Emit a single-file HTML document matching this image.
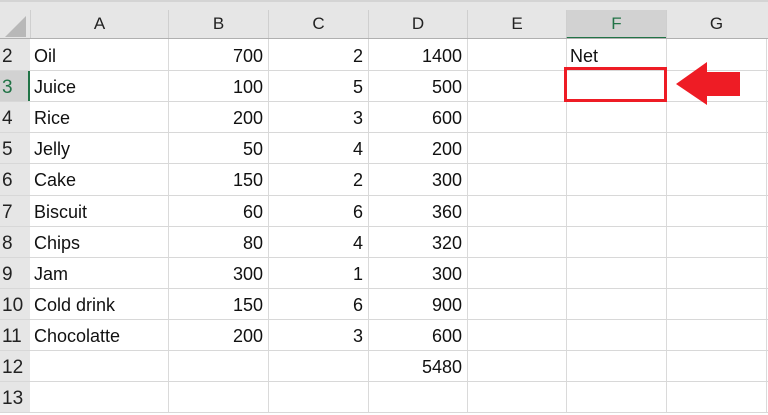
<!DOCTYPE html><html><head><style>
body{margin:0;width:768px;height:413px;overflow:hidden;background:#fff;font-family:"Liberation Sans",sans-serif;position:relative}
.a{position:absolute;box-sizing:border-box}
.h{background:#e6e6e6;color:#222;font-size:17px;text-align:center;line-height:28px}
.t{font-size:18px;color:#111;line-height:31px;white-space:nowrap;margin-top:2px}
</style></head><body>
<div class="a" style="left:0;top:0;width:768px;height:39px;background:#e6e6e6"></div>
<div class="a" style="left:0;top:0;width:768px;height:2px;background:#d4d4d4"></div>
<div class="a" style="left:0;top:39px;width:30px;height:374px;background:#e6e6e6"></div>
<svg class="a" style="left:3px;top:14px" width="24" height="24"><polygon points="23,2 23,23 2,23" fill="#b8b8b8"/></svg>
<div id="g"></div>
<script>
var cols=[30,168,268,368,467,566,666,766],L="ABCDEFG",h='';
for(var i=0;i<7;i++){h+='<div class="a h" style="left:'+cols[i]+'px;top:10px;width:'+(cols[i+1]-cols[i])+'px;height:29px;border-left:1px solid #cfcfcf;'+(i==5?'background:#d2d2d2;color:#217346;border-bottom:2px solid #217346;':'')+'">'+L[i]+'</div>';}
var rt=function(r){return 39+(r-2)*31.1};
for(var c=1;c<8;c++){h+='<div class="a" style="left:'+cols[c]+'px;top:39px;width:1px;height:374px;background:#dadada"></div>';}
h+='<div class="a" style="left:0;top:38px;width:768px;height:1px;background:#b0b0b0"></div>';
for(var r=3;r<=14;r++){h+='<div class="a" style="left:0;top:'+rt(r)+'px;width:768px;height:1px;background:#d8d8d8"></div>';}
for(var r=2;r<=13;r++){h+='<div class="a" style="left:0;top:'+(rt(r)+1)+'px;width:30px;height:30px;font-size:19px;line-height:33px;padding-left:2px;color:'+(r==3?'#217346;background:#d2d2d2;border-right:2px solid #217346':'#222')+'">'+r+'</div>';}
var d=[["Oil",700,2,1400],["Juice",100,5,500],["Rice",200,3,600],["Jelly",50,4,200],["Cake",150,2,300],["Biscuit",60,6,360],["Chips",80,4,320],["Jam",300,1,300],["Cold drink",150,6,900],["Chocolatte",200,3,600],["","","",5480]];
for(var i=0;i<d.length;i++){var y=rt(i+2);
h+='<div class="a t" style="left:34px;top:'+y+'px">'+d[i][0]+'</div>';
for(var j=1;j<4;j++)h+='<div class="a t" style="left:'+cols[j]+'px;width:'+(cols[j+1]-cols[j]-5)+'px;text-align:right;top:'+y+'px">'+d[i][j]+'</div>';}
h+='<div class="a t" style="left:570px;top:'+rt(2)+'px">Net</div>';
document.getElementById('g').innerHTML=h;
</script>
<div class="a" style="left:564px;top:67px;width:103px;height:35px;border:3px solid #ee1c25"></div>
<svg class="a" style="left:670px;top:58px" width="75" height="50"><polygon points="6,26 37,4 37,14 70,14 70,38 37,38 37,47" fill="#ee1c25"/></svg>
</body></html>
